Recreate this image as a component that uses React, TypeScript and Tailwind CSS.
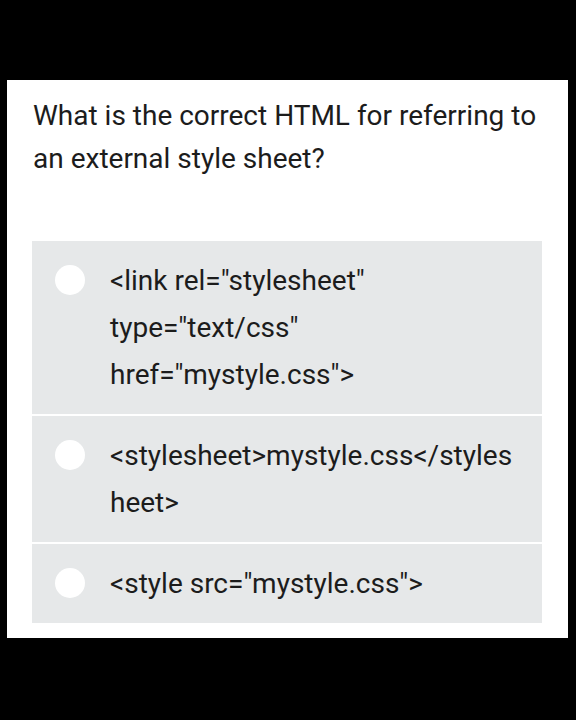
const options = [
  '<link rel="stylesheet" type="text/css" href="mystyle.css">',
  "<stylesheet>mystyle.css</stylesheet>",
  '<style src="mystyle.css">',
];

export default function App() {
  return (
    <div className="min-h-[720px] w-[576px] bg-black pt-[80px] pl-[7px]" style={{ fontFamily: "Roboto, 'Liberation Sans', sans-serif" }}>
      <div className="w-[561px] bg-white pl-[25px] pr-[26px] pt-[14px] pb-[15px]">
        <p className="pl-[1px] text-[28px] leading-[43px] text-[#1c1c1c]">
          What is the correct HTML for referring to an external style sheet?
        </p>
        <div className="mt-[61px] flex flex-col gap-[2px] bg-white">
          {options.map((o) => (
            <div key={o} className="flex items-start bg-[#e6e8e9] py-4 pl-[23px] pr-[16px]">
              <span className="mt-[8px] h-[30px] w-[30px] shrink-0 rounded-full bg-white" />
              <span className="ml-[25px] min-w-0 break-words text-[28px] leading-[47px] text-[#1c1c1c]">{o}</span>
            </div>
          ))}
        </div>
      </div>
    </div>
  );
}
